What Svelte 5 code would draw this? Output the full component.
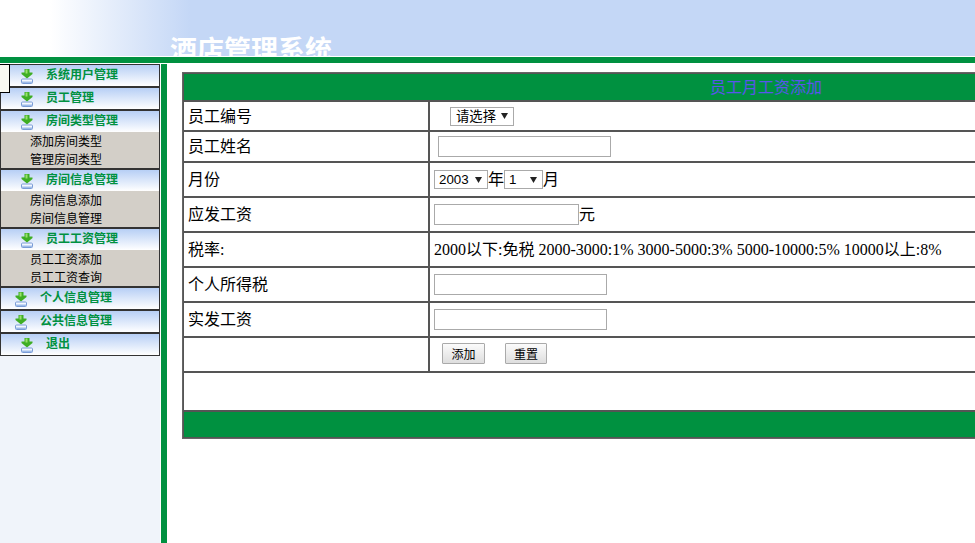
<script>
  const menu = [
    { label: '系统用户管理', sub: [] },
    { label: '员工管理', sub: [] },
    { label: '房间类型管理', sub: ['添加房间类型', '管理房间类型'] },
    { label: '房间信息管理', sub: ['房间信息添加', '房间信息管理'] },
    { label: '员工工资管理', sub: ['员工工资添加', '员工工资查询'] },
    { label: '个人信息管理', sub: [], shift: true },
    { label: '公共信息管理', sub: [], shift: true },
    { label: '退出', sub: [] }
  ];
</script>

<div class="page">
  <header class="top"><h1>酒店管理系统</h1></header>
  <div class="rule"></div>
  <div class="body">
    <aside class="side">
      <div class="tab"></div>
      {#each menu as m}
        <section class="group">
          <div class="head" class:shift={m.shift}>
            <svg width="12" height="15" viewBox="0 0 12 15">
              <path d="M3.5 0h5v3.5H11.5V5L6 9.5 0.5 5V3.5H3.5z" fill="#3fae24"/>
              <path d="M4.5 0.5h2v4h-2z" fill="#9ae26a"/>
              <rect x="0.5" y="10" width="11" height="4.5" rx="1" fill="#f4f8ff" stroke="#7a9cd6"/>
              <rect x="1" y="12.5" width="10" height="1.5" fill="#9dbbe9"/>
            </svg>
            <span>{m.label}</span>
          </div>
          {#if m.sub.length}
            <div class="subs">
              {#each m.sub as s}<div class="sub">{s}</div>{/each}
            </div>
          {/if}
        </section>
      {/each}
    </aside>
    <div class="stripe"></div>
    <main class="main">
      <table>
        <colgroup><col class="c1" /><col /></colgroup>
        <tbody>
          <tr class="r-title"><td colspan="2" class="bar title">员工月工资添加</td></tr>
          <tr class="h30"><td class="lab lab-first">员工编号</td><td><select class="s-emp"><option>请选择</option></select></td></tr>
          <tr class="h31"><td class="lab">员工姓名</td><td><input class="i-name" /></td></tr>
          <tr class="h35"><td class="lab">月份</td><td><div class="inline"><select class="s-year"><option>2003</option></select><span>年</span><select class="s-month"><option>1</option></select><span>月</span></div></td></tr>
          <tr class="h35"><td class="lab">应发工资</td><td><div class="inline"><input class="i-pay" /><span>元</span></div></td></tr>
          <tr class="h35"><td class="lab">税率:</td><td class="lab">2000以下:免税 2000-3000:1% 3000-5000:3% 5000-10000:5% 10000以上:8%</td></tr>
          <tr class="h35"><td class="lab">个人所得税</td><td><input class="i-wide" /></td></tr>
          <tr class="h35"><td class="lab">实发工资</td><td><input class="i-wide" /></td></tr>
          <tr class="h35"><td></td><td class="btns"><button class="b1">添加</button><button class="b2">重置</button></td></tr>
          <tr class="h39"><td colspan="2"></td></tr>
          <tr class="r-foot"><td colspan="2" class="bar"></td></tr>
        </tbody>
      </table>
    </main>
  </div>
</div>

<style>
  :global(body) { margin: 0; overflow: hidden; background: #fff; }
  .page {
    width: 975px; height: 543px; overflow: hidden; display: flex; flex-direction: column;
    font-family: "Liberation Serif", "Noto Sans CJK SC", serif; color: #000;
  }
  .top {
    height: 56px; flex: none; overflow: hidden; border-bottom: 1px solid #fff;
    background: linear-gradient(90deg, #fff 0, #fff 50px, #c4d7f6 190px, #c4d7f6 100%);
  }
  h1 {
    margin: 35px 0 0 170px; font-size: 27px; line-height: 27px; font-weight: 700; color: #fff;
    font-family: "Noto Sans CJK SC", sans-serif; white-space: nowrap;
  }
  .rule { height: 6px; flex: none; background: #009140; }
  .body { flex: 1; display: flex; min-height: 0; padding-top: 1px; }
  .side {
    width: 160px; flex: none; background: #f0f4fa; position: relative;
    font-family: "Noto Sans CJK SC", sans-serif; font-size: 12px;
  }
  .tab {
    position: absolute; left: 0; top: 0; width: 9px; height: 27px;
    border: 1px solid #000; border-left: 0; background: #fafaf2; z-index: 1;
  }
  .group { border: 1px solid #333; }
  .head {
    height: 21px; display: flex; align-items: center; padding-left: 20px; gap: 13px;
    background: linear-gradient(180deg, #b7cff5, #ffffff);
    color: #009140; font-weight: 700; line-height: 21px;
  }
  .head.shift { padding-left: 14px; }
  .head svg { flex: none; margin-top: 2px; }
  .head span { margin-top: -4px; }
  .subs { background: #d3cfc8; height: 36px; padding-left: 29px; }
  .sub { height: 18px; line-height: 18px; }
  .stripe { width: 6px; flex: none; margin-left: 1px; background: #009140; }
  .main { flex: 1; min-width: 0; padding: 8px 0 0 15px; }
  table {
    width: 1168px; table-layout: fixed; border-collapse: separate; border-spacing: 0;
    border: 1px solid #666; font-size: 16px;
  }
  .c1 { width: 246px; }
  td { border: 1px solid #555; padding: 0 0 0 4px; vertical-align: middle; white-space: nowrap; box-sizing: border-box; }
  .bar { background: #009140; text-align: center; padding: 0; }
  .title { color: #5a55ea; padding-bottom: 2px; }
  .lab { padding-bottom: 4px; }
  .lab-first { padding-bottom: 2px; }
  .btns { padding-bottom: 2px; }
  .r-title td { height: 28px; }
  .r-foot td { height: 27px; }
  .h30 td { height: 30px; }
  .h31 td { height: 31px; }
  .h35 td { height: 35px; }
  .h39 td { height: 39px; }
  .inline { display: flex; align-items: center; }
  .inline span { margin-bottom: 4px; }
  input {
    box-sizing: border-box; height: 21px; border: 1px solid #aaa; padding: 0; margin: 0;
    background: #fff; display: block; border-radius: 0;
  }
  .i-name { width: 173px; margin-left: 4px; }
  .i-pay { width: 145px; }
  .i-wide { width: 173px; }
  select {
    appearance: none; box-sizing: border-box; height: 19px; border: 1px solid #aaa; border-radius: 0;
    font-size: 13.33px; padding: 0 0 0 4px; margin: 0; font-family: "Liberation Sans", "Noto Sans CJK SC", sans-serif;
    color: #000;
    background: #fff url("data:image/svg+xml,%3Csvg xmlns='http://www.w3.org/2000/svg' width='7' height='6'%3E%3Cpath d='M0 0h7L3.5 6z' fill='%23222'/%3E%3C/svg%3E") no-repeat right 5px center;
  }
  .s-emp { width: 64px; margin-left: 16px; display: block; padding-left: 5px; }
  .s-year { width: 54px; }
  .s-month { width: 39px; }
  button {
    box-sizing: border-box; height: 21px; padding: 0; border: 1px solid #aaa; border-radius: 1px;
    background: linear-gradient(180deg, #fbfbfb, #dedede);
    font-size: 12px; font-family: "Noto Sans CJK SC", sans-serif; color: #000; vertical-align: middle;
  }
  .b1 { width: 43px; margin-left: 8px; }
  .b2 { width: 42px; margin-left: 20px; }
</style>
